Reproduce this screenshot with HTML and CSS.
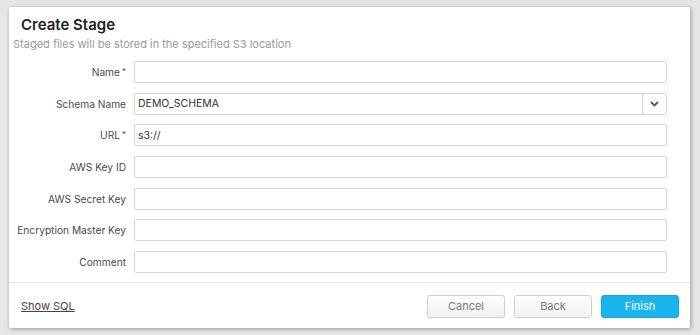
FILE: index.html
```html
<!DOCTYPE html>
<html lang="en">
<head>
    <meta charset="UTF-8">
    <title>Create Stage</title>
    <link rel="stylesheet" href="styles.css">
</head>
<body>

<div class="dialog">
    <!-- Header -->
    <div class="dialog-header">
        <h2>Create Stage</h2>
        <p class="subtitle">Staged files will be stored in the specified S3 location</p>
    </div>

    <!-- Form -->
    <div class="stage-form">
        <label>Name<span class="req">*</span></label>
        <input type="text">

        <label>Schema Name</label>
        <div class="select">
            <span class="select-value">DEMO_SCHEMA</span>
            <span class="select-arrow">
                <svg width="9" height="6" viewBox="0 0 9 6"><path d="M1 1l3.5 3.5L8 1" fill="none" stroke="#555" stroke-width="1.8"/></svg>
            </span>
        </div>

        <label>URL<span class="req">*</span></label>
        <input type="text" value="s3://">

        <label>AWS Key ID</label>
        <input type="text">

        <label>AWS Secret Key</label>
        <input type="text">

        <label>Encryption Master Key</label>
        <input type="text">

        <label>Comment</label>
        <input type="text">
    </div>

    <!-- Footer -->
    <div class="dialog-footer">
        <a class="show-sql" href="#">Show SQL</a>
        <div class="buttons">
            <button class="btn">Cancel</button>
            <button class="btn">Back</button>
            <button class="btn primary">Finish</button>
        </div>
    </div>
</div>

</body>
</html>
```

FILE: styles.css
```css
/* Global */
* {
    margin: 0;
    padding: 0;
    box-sizing: border-box;
    font-family: Inter, "Noto Sans", Arial, sans-serif;
}

body {
    background-color: #e6e6e6;
    padding: 7px 10px 7px 9px;
}

/* Dialog */
.dialog {
    width: 681px;
    height: 321px;
    background: #fff;
    border-radius: 2px;
    box-shadow: 1px 1px 4px rgba(0, 0, 0, 0.35);
    display: flex;
    flex-direction: column;
}

.dialog-header {
    padding: 8px 12px 0 4px;
}

.dialog-header h2 {
    font-size: 15px;
    font-weight: 600;
    color: #222;
    line-height: 20px;
    margin-left: 8px;
}

.dialog-header .subtitle {
    font-size: 11px;
    color: #9a9a9a;
    line-height: 14px;
    margin-top: 2px;
}

/* Form grid */
.stage-form {
    display: grid;
    grid-template-columns: 109px 1fr;
    column-gap: 8px;
    row-gap: 9.67px;
    align-items: center;
    padding: 10px 23px 0 8px;
}

.stage-form label {
    font-size: 10.2px;
    color: #4a4a4a;
    text-align: right;
    white-space: nowrap;
}

.stage-form .req {
    margin-left: 2px;
    font-size: 8px;
    vertical-align: 2px;
}

.stage-form input,
.select {
    height: 22px;
    border: 1px solid #d4d4d4;
    border-radius: 2px;
    font-size: 10.5px;
    color: #333;
    padding: 0 3px;
    outline: none;
    width: 100%;
}

.select {
    display: flex;
    align-items: center;
    padding: 0;
}

.select-value {
    flex: 1;
    padding-left: 3px;
}

.select-arrow {
    width: 24px;
    height: 100%;
    border-left: 1px solid #d4d4d4;
    display: flex;
    align-items: center;
    justify-content: center;
}

/* Footer */
.dialog-footer {
    margin-top: auto;
    border-top: 1px solid #e4e4e4;
    height: 46px;
    display: flex;
    justify-content: space-between;
    align-items: center;
    padding: 1px 11px 0 12px;
}

.show-sql {
    font-size: 11px;
    color: #444;
    text-decoration: underline;
}

.buttons {
    display: flex;
    gap: 9px;
}

.btn {
    width: 78px;
    height: 23px;
    border: 1px solid #cfcfcf;
    border-radius: 3px;
    background: linear-gradient(#fdfdfd, #f1f1f1);
    font-size: 11px;
    color: #777;
    cursor: pointer;
}

.btn.primary {
    background: #19b3ee;
    border-color: #14a6de;
    color: #fff;
}
```
